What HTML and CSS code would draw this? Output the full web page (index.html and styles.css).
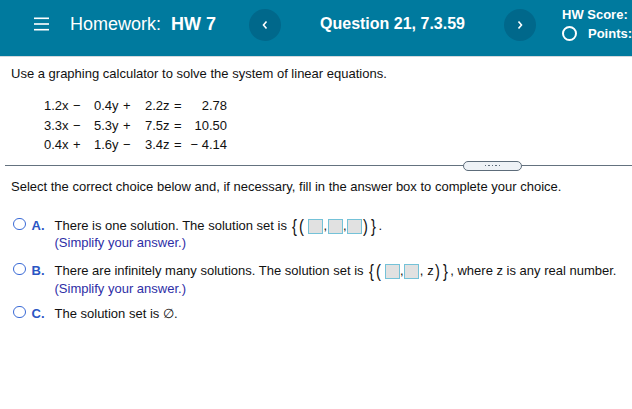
FILE: index.html
```html
<!DOCTYPE html>
<html>
<head>
<meta charset="utf-8">
<link rel="stylesheet" href="styles.css">
</head>
<body>
<header class="topbar">
  <svg class="menu" width="15" height="14" viewBox="0 0 15 14"><rect x="0" y="0.5" width="15" height="1.6" fill="#fff"/><rect x="0" y="6.2" width="15" height="1.6" fill="#fff"/><rect x="0" y="11.9" width="15" height="1.6" fill="#fff"/></svg>
  <div class="title">Homework:&nbsp; <b>HW 7</b></div>
  <div class="navbtn"><svg width="8" height="10" viewBox="0 0 8 10"><path d="M5.5 1.5 L2.5 5 L5.5 8.5" fill="none" stroke="#fff" stroke-width="1.6"/></svg></div>
  <div class="question">Question 21, 7.3.59</div>
  <div class="navbtn"><svg width="8" height="10" viewBox="0 0 8 10"><path d="M2.5 1.5 L5.5 5 L2.5 8.5" fill="none" stroke="#fff" stroke-width="1.6"/></svg></div>
  <div class="score">
    <div class="score-title">HW Score:</div>
    <div class="score-row"><span class="ring"></span><span>Points:</span></div>
  </div>
</header>

<main class="content">
  <p class="instr">Use a graphing calculator to solve the system of linear equations.</p>
  <div class="eqs">
    <span>1.2x</span><span class="op">−</span><span class="t">0.4y</span><span class="op">+</span><span class="t">2.2z</span><span class="op">=</span><span class="rhs">2.78</span>
    <span>3.3x</span><span class="op">−</span><span class="t">5.3y</span><span class="op">+</span><span class="t">7.5z</span><span class="op">=</span><span class="rhs">10.50</span>
    <span>0.4x</span><span class="op">+</span><span class="t">1.6y</span><span class="op">−</span><span class="t">3.4z</span><span class="op">=</span><span class="rhs">− 4.14</span>
  </div>
</main>

<div class="sep">
  <div class="sep-line left"></div>
  <div class="pill"><i></i><i></i><i></i><i></i><i></i></div>
  <div class="sep-line"></div>
</div>

<main class="content">
  <p class="select">Select the correct choice below and, if necessary, fill in the answer box to complete your choice.</p>

  <div class="opt opt-a">
    <span class="radio"></span>
    <span class="lbl">A.</span>
    <div class="otext">
      <div class="main">There is one solution. The solution set is <span class="br lb">{</span><span class="br lp">(</span><span class="box"></span><span class="cm">,</span><span class="box"></span><span class="cm">,</span><span class="box"></span><span class="br rp">)</span><span class="br rb">}</span>.</div>
      <div class="hint">(Simplify your answer.)</div>
    </div>
  </div>

  <div class="opt opt-b">
    <span class="radio"></span>
    <span class="lbl">B.</span>
    <div class="otext">
      <div class="main">There are infinitely many solutions. The solution set is <span class="br lb">{</span><span class="br lp">(</span><span class="box"></span><span class="cm">,</span><span class="box"></span><span class="cm">,</span> z<span class="br rp">)</span><span class="br rb">}</span>, where z is any real number.</div>
      <div class="hint">(Simplify your answer.)</div>
    </div>
  </div>

  <div class="opt opt-c">
    <span class="radio"></span>
    <span class="lbl">C.</span>
    <div class="otext">
      <div class="main">The solution set is ∅.</div>
    </div>
  </div>
</main>
</body>
</html>
```

FILE: styles.css
```css
html, body {
  margin: 0;
  padding: 0;
  background: #fff;
  overflow: hidden;
}
body {
  font-family: "Liberation Sans", Arial, sans-serif;
  font-size: 13px;
  color: #111;
  white-space: nowrap;
}

.topbar {
  display: flex;
  align-items: flex-start;
  height: 56px;
  background: #007a9e;
  border-bottom: 1px solid #d3d9dd;
  color: #fff;
}
.menu {
  margin-left: 34px;
  margin-top: 17px;
  flex: none;
}
.title {
  margin-left: 21px;
  margin-top: 14px;
  width: 179px;
  flex: none;
  font-size: 18px;
  line-height: 20px;
}
.title b { font-weight: bold; }
.navbtn {
  flex: none;
  width: 32px;
  height: 32px;
  margin-top: 9px;
  border-radius: 50%;
  background: #00688b;
  display: flex;
  align-items: center;
  justify-content: center;
}
.question {
  flex: none;
  width: 223px;
  margin-top: 14px;
  text-align: center;
  font-size: 16px;
  line-height: 20px;
  font-weight: bold;
}
.score {
  flex: none;
  margin-left: 26px;
  margin-top: 7px;
  font-weight: bold;
  font-size: 13px;
  line-height: 15px;
}
.score-row {
  display: flex;
  align-items: center;
  margin-top: 4px;
}
.ring {
  width: 11px;
  height: 11px;
  border: 2px solid #fff;
  border-radius: 50%;
  margin-right: 11px;
}

.content {
  display: block;
  padding-left: 11px;
}
.instr {
  margin: 9px 0 0 0;
  line-height: 15px;
}
.eqs {
  display: grid;
  grid-template-columns: 25px 25px 25px 26px 25px 20px 37px;
  margin: 15px 0 0 33px;
  line-height: 19.5px;
}
.eqs .op { padding-left: 4px; }
.eqs .rhs { text-align: right; }

.sep {
  display: flex;
  align-items: center;
  margin: 6px 0 0 5px;
  height: 10px;
}
.sep-line {
  flex: 1;
  height: 1px;
  background: #64727f;
}
.sep-line.left { flex: none; width: 458px; }
.pill {
  flex: none;
  width: 57px;
  height: 8px;
  border: 1px solid #5d6c7a;
  border-radius: 5px;
  background: #eef2f6;
  display: flex;
  align-items: center;
  justify-content: center;
  gap: 2px;
}
.pill i {
  display: block;
  width: 1.5px;
  height: 1.5px;
  background: #5d6c7a;
}

.select {
  margin: 8px 0 0 0;
  line-height: 15px;
}

.opt {
  display: flex;
  align-items: flex-start;
}
.opt-a { margin-top: 22px; }
.opt-b { margin-top: 9px; }
.opt-c { margin-top: 8px; }
.radio {
  flex: none;
  width: 10.5px;
  height: 10.5px;
  border: 1.3px solid #3a6ad6;
  border-radius: 50%;
  margin: 2px 0 0 2px;
}
.opt-b .radio { margin-top: 3px; }
.lbl {
  flex: none;
  width: 23px;
  margin-left: 6px;
  color: #2a55c4;
  font-weight: bold;
  line-height: 19px;
}
.opt-b .lbl { line-height: 21px; }
.main {
  line-height: 19px;
}
.opt-b .main { line-height: 21px; }
.hint {
  line-height: 16px;
  color: #2e2ea6;
}
.opt-b .hint { line-height: 15px; }
.br {
  display: inline-block;
  font-size: 14px;
  line-height: 10px;
  transform: scale(1.05, 1.35);
}
.br.lb { margin: 0 2px 0 1.5px; }
.br.lp { margin: 0 4px 0 0.5px; }
.br.rp { margin: 0 2.5px 0 1px; }
.br.rb { margin: 0 2.5px 0 1px; }
.box {
  display: inline-block;
  width: 13px;
  height: 13px;
  background: #e1e1e1;
  border: 1.5px solid #74c2d8;
  vertical-align: -4px;
}
.cm {
  margin: 0 0.5px;
}
```
